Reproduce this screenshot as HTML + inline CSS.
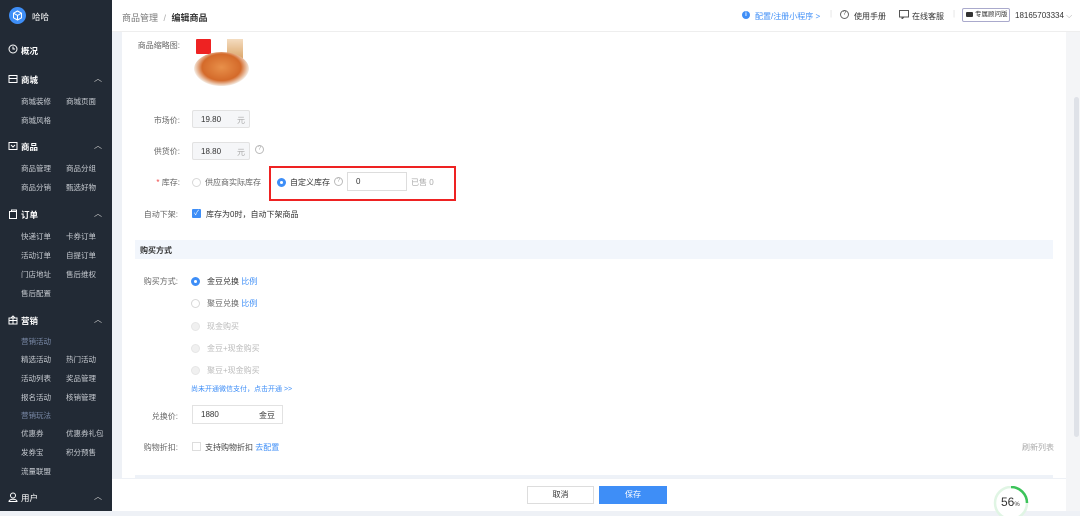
<!DOCTYPE html>
<html><head><meta charset="utf-8"><style>
*{margin:0;padding:0;box-sizing:border-box}
body{width:1080px;height:511px;overflow:hidden;font-family:"Liberation Sans","Noto Sans CJK SC",sans-serif;font-size:8px;color:#555;background:#eef1f6;position:relative}
.sb{position:absolute;left:0;top:0;width:112px;height:511px;background:#222a35;color:#fff}
.sb .logo{position:absolute;left:9px;top:7px;width:17px;height:17px;border-radius:50%;background:#3e8ef7}
.sb .t{position:absolute;font-size:8px;color:#e8e8e8}
.sb .h{font-size:8.5px;color:#fff;font-weight:bold}
.sb .s{color:#c8ccd2;font-size:7.5px}
.sb .g{color:#7a8aa8;font-size:7.5px}
.sb .ar{position:absolute;left:94px;font-size:8px;color:#ccc}
.hd{position:absolute;left:112px;top:0;width:968px;height:32px;background:#fff;border-bottom:1px solid #eee}
.card{position:absolute;left:122px;top:32px;width:944px;height:446px;background:#fff}
.a{position:absolute;white-space:nowrap}
.lbl{color:#666;font-size:8px;text-align:right;width:60px}
.inp{position:absolute;border:1px solid #e2e2e2;background:#f5f6f8;height:18px;border-radius:2px}
.rad{position:absolute;width:9px;height:9px;border-radius:50%;border:1px solid #d8d8d8;background:#fff}
.rad.on{border:3px solid #3e8ef7;background:#fff}
.rad.dis{background:#f0f0f0;border-color:#e6e6e6}
.blue{color:#3e8ef7}
.scroll{position:absolute;left:1066px;top:32px;width:14px;height:479px;background:#f4f5f7}
</style></head><body>
<div class="sb">
<div class="logo"><svg width="17" height="17" viewBox="0 0 17 17"><path d="M8.5 4l4 2.2v4.6l-4 2.2-4-2.2V6.2z M4.5 6.2l4 2.2 4-2.2 M8.5 8.4V13" fill="none" stroke="#fff" stroke-width="1"/></svg></div>
<div class="t h" style="left:32px;top:11px;font-weight:normal">哈哈</div>
<svg class="a" style="left:8px;top:44px" width="10" height="10"><circle cx="5" cy="5" r="4" fill="none" stroke="#fff"/><path d="M5 2.5V5h2" stroke="#fff" fill="none"/></svg>
<div class="t h" style="left:21px;top:45px">概况</div>
<svg class="a" style="left:8px;top:74px" width="10" height="10"><rect x="1" y="1.5" width="8" height="7" fill="none" stroke="#fff"/><path d="M1 4.5h8" stroke="#fff"/></svg>
<div class="t h" style="left:21px;top:74px">商城</div><div class="ar" style="top:73px">︿</div>
<div class="t s" style="left:21px;top:96px">商城装修</div><div class="t s" style="left:66px;top:96px">商城页面</div>
<div class="t s" style="left:21px;top:115px">商城风格</div>
<svg class="a" style="left:8px;top:141px" width="10" height="10"><rect x="1" y="1.5" width="8" height="7" fill="none" stroke="#fff"/><path d="M3 4l2 2 2-2" stroke="#fff" fill="none"/></svg>
<div class="t h" style="left:21px;top:141px">商品</div><div class="ar" style="top:140px">︿</div>
<div class="t s" style="left:21px;top:163px">商品管理</div><div class="t s" style="left:66px;top:163px">商品分组</div>
<div class="t s" style="left:21px;top:182px">商品分销</div><div class="t s" style="left:66px;top:182px">甄选好物</div>
<svg class="a" style="left:8px;top:209px" width="10" height="10"><rect x="1.5" y="2.5" width="7" height="7" fill="none" stroke="#fff"/><path d="M3.5 2.5V1h5v6" stroke="#fff" fill="none"/></svg>
<div class="t h" style="left:21px;top:209px">订单</div><div class="ar" style="top:208px">︿</div>
<div class="t s" style="left:21px;top:231px">快递订单</div><div class="t s" style="left:66px;top:231px">卡券订单</div>
<div class="t s" style="left:21px;top:250px">活动订单</div><div class="t s" style="left:66px;top:250px">自提订单</div>
<div class="t s" style="left:21px;top:269px">门店地址</div><div class="t s" style="left:66px;top:269px">售后维权</div>
<div class="t s" style="left:21px;top:288px">售后配置</div>
<svg class="a" style="left:8px;top:315px" width="10" height="10"><rect x="1" y="3" width="8" height="6" fill="none" stroke="#fff"/><path d="M1 5.5h8M5 3v6M3 3l2-2 2 2" stroke="#fff" fill="none"/></svg>
<div class="t h" style="left:21px;top:315px">营销</div><div class="ar" style="top:314px">︿</div>
<div class="t g" style="left:21px;top:336px">营销活动</div>
<div class="t s" style="left:21px;top:354px">精选活动</div><div class="t s" style="left:66px;top:354px">热门活动</div>
<div class="t s" style="left:21px;top:373px">活动列表</div><div class="t s" style="left:66px;top:373px">奖品管理</div>
<div class="t s" style="left:21px;top:392px">报名活动</div><div class="t s" style="left:66px;top:392px">核销管理</div>
<div class="t g" style="left:21px;top:410px">营销玩法</div>
<div class="t s" style="left:21px;top:428px">优惠券</div><div class="t s" style="left:66px;top:428px">优惠券礼包</div>
<div class="t s" style="left:21px;top:447px">发券宝</div><div class="t s" style="left:66px;top:447px">积分预售</div>
<div class="t s" style="left:21px;top:466px">流量联盟</div>
<svg class="a" style="left:8px;top:492px" width="10" height="10"><circle cx="5" cy="3.5" r="2.5" fill="none" stroke="#fff"/><path d="M1 9.5c0-3 8-3 8 0z" stroke="#fff" fill="none"/></svg>
<div class="t h" style="left:21px;top:492px;font-weight:normal">用户</div><div class="ar" style="top:491px">︿</div>
</div>
<div class="hd">
<div class="a" style="left:10px;top:11px;font-size:9px;color:#777">商品管理 <span style="color:#aaa;margin:0 3px">/</span> <b style="color:#333">编辑商品</b></div>
<div class="a" style="left:630px;top:11px;width:8px;height:8px;border-radius:50%;background:#3e8ef7;color:#fff;font-size:6px;text-align:center;line-height:8px;font-weight:bold">i</div>
<div class="a blue" style="left:643px;top:11px;font-size:8px">配置/注册小程序 &gt;</div>
<div class="a" style="left:718px;top:9px;color:#ddd">|</div>
<div class="a" style="left:728px;top:10px;width:9px;height:9px;border-radius:50%;border:1px solid #666;font-size:6px;text-align:center;line-height:7px">?</div>
<div class="a" style="left:742px;top:11px;color:#333">使用手册</div>
<svg class="a" style="left:787px;top:10px" width="10" height="9"><rect x="0.5" y="0.5" width="9" height="6.5" fill="none" stroke="#555"/><path d="M3 7v2l2-2" stroke="#555" fill="none"/></svg>
<div class="a" style="left:800px;top:11px;color:#333">在线客服</div>
<div class="a" style="left:841px;top:9px;color:#ddd">|</div>
<div class="a" style="left:850px;top:8px;width:48px;height:14px;border:1px solid #aac;border-radius:2px;font-size:6.5px;line-height:12px;padding-left:12px;color:#333">专属顾问版</div>
<div class="a" style="left:854px;top:12px;width:7px;height:5px;background:#333;border-radius:1px"></div>
<div class="a" style="left:903px;top:11px;color:#333">18165703334 <span style="color:#aaa">⌵</span></div>
</div>
<div class="card">
<div class="a lbl" style="left:-2px;top:8px">商品缩略图:</div>
<div class="a" style="left:74px;top:7px;width:15px;height:15px;background:#e22;border-radius:1px"></div>
<div class="a" style="left:105px;top:7px;width:16px;height:22px;background:linear-gradient(#f4dcc0,#d9a060)"></div>
<div class="a" style="left:72px;top:20px;width:55px;height:34px;border-radius:50% 50% 45% 45%;background:radial-gradient(ellipse at 50% 45%,#e8904a 0%,#d46a2a 50%,#f3e6da 70%,transparent 72%)"></div>
<div class="a lbl" style="left:-2px;top:83px">市场价:</div>
<div class="inp" style="left:70px;top:78px;width:58px"><span class="a" style="left:8px;top:4px;color:#333">19.80</span><span class="a" style="left:44px;top:4px;color:#aaa">元</span></div>
<div class="a lbl" style="left:-2px;top:114px">供货价:</div>
<div class="inp" style="left:70px;top:110px;width:58px"><span class="a" style="left:8px;top:4px;color:#333">18.80</span><span class="a" style="left:44px;top:4px;color:#aaa">元</span></div>
<div class="a" style="left:133px;top:113px;width:9px;height:9px;border-radius:50%;border:1px solid #bbb;font-size:6px;text-align:center;line-height:7px;color:#aaa">?</div>
<div class="a lbl" style="left:-2px;top:145px"><span style="color:#e44">* </span>库存:</div>
<div class="rad" style="left:70px;top:146px"></div>
<div class="a" style="left:83px;top:145px;color:#666">供应商实际库存</div>
<div class="a" style="left:147px;top:134px;width:187px;height:35px;border:2px solid #e22"></div>
<div class="rad on" style="left:155px;top:146px"></div>
<div class="a" style="left:168px;top:145px;color:#333">自定义库存</div>
<div class="a" style="left:212px;top:145px;width:9px;height:9px;border-radius:50%;border:1px solid #bbb;font-size:6px;text-align:center;line-height:7px;color:#aaa">?</div>
<div class="a" style="left:225px;top:140px;width:60px;height:19px;border:1px solid #ddd;background:#fff"><span class="a" style="left:8px;top:4px;color:#333">0</span></div>
<div class="a" style="left:289px;top:145px;color:#aaa">已售 0</div>
<div class="a lbl" style="left:-4px;top:177px">自动下架:</div>
<div class="a" style="left:70px;top:177px;width:9px;height:9px;background:#3e8ef7;border-radius:1px;color:#fff;font-size:7px;line-height:9px;text-align:center">✓</div>
<div class="a" style="left:84px;top:177px;color:#333">库存为0时，自动下架商品</div>
<div class="a" style="left:13px;top:208px;width:918px;height:19px;background:#f2f6fc"><span class="a" style="left:5px;top:5px;color:#333;font-weight:bold">购买方式</span></div>
<div class="a lbl" style="left:-4px;top:244px">购买方式:</div>
<div class="rad on" style="left:69px;top:245px"></div><div class="a" style="left:85px;top:244px;color:#333">金豆兑换 <span class="blue">比例</span></div>
<div class="rad" style="left:69px;top:267px"></div><div class="a" style="left:85px;top:266px;color:#666">聚豆兑换 <span class="blue">比例</span></div>
<div class="rad dis" style="left:69px;top:290px"></div><div class="a" style="left:85px;top:289px;color:#bbb">现金购买</div>
<div class="rad dis" style="left:69px;top:312px"></div><div class="a" style="left:85px;top:311px;color:#bbb">金豆+现金购买</div>
<div class="rad dis" style="left:69px;top:334px"></div><div class="a" style="left:85px;top:333px;color:#bbb">聚豆+现金购买</div>
<div class="a blue" style="left:69px;top:352px;font-size:7px">尚未开通微信支付，点击开通 &gt;&gt;</div>
<div class="a lbl" style="left:-4px;top:379px">兑换价:</div>
<div class="a" style="left:70px;top:373px;width:91px;height:19px;border:1px solid #e2e2e2"><span class="a" style="left:8px;top:4px;color:#333">1880</span><span class="a" style="left:66px;top:4px;color:#333">金豆</span></div>
<div class="a lbl" style="left:-4px;top:410px">购物折扣:</div>
<div class="a" style="left:70px;top:410px;width:9px;height:9px;border:1px solid #ddd"></div>
<div class="a" style="left:83px;top:410px;color:#444">支持购物折扣 <span class="blue">去配置</span></div>
<div class="a" style="left:900px;top:410px;color:#aaa">刷新列表</div>
<div class="a" style="left:13px;top:443px;width:918px;height:3px;background:#eef2f8"></div>
</div>
<div class="scroll"><div class="a" style="left:8px;top:65px;width:5px;height:340px;background:#dfe2e8;border-radius:3px"></div></div>
<div class="a" style="left:112px;top:478px;width:954px;height:33px;background:#fff;border-top:1px solid #eef1f6"></div>
<div class="a" style="left:527px;top:486px;width:67px;height:18px;border:1px solid #ddd;background:#fff;text-align:center;line-height:16px;color:#333">取消</div>
<div class="a" style="left:599px;top:486px;width:68px;height:18px;background:#3e8ef7;text-align:center;line-height:18px;color:#fff">保存</div>
<svg class="a" style="left:992px;top:486px" width="40" height="30"><circle cx="19" cy="17" r="16" fill="#fff" stroke="#e0f5e4" stroke-width="2.5"/><path d="M19 1A16 16 0 0 1 35 17" stroke="#3cc35a" stroke-width="2.5" fill="none"/><text x="9" y="20" font-family="Liberation Sans" font-size="12" fill="#333">56<tspan font-size="6">%</tspan></text></svg>
</body></html>
